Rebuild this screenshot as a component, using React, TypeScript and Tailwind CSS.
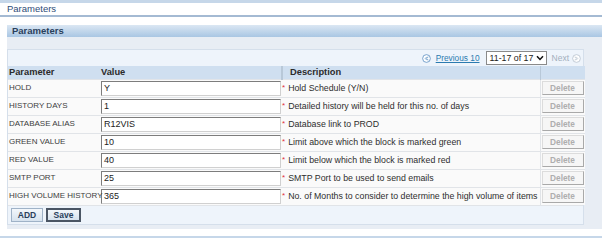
import React from "react";

const rows = [
  { name: "HOLD", value: "Y", desc: "Hold Schedule (Y/N)" },
  { name: "HISTORY DAYS", value: "1", desc: "Detailed history will be held for this no. of days" },
  { name: "DATABASE ALIAS", value: "R12VIS", desc: "Database link to PROD" },
  { name: "GREEN VALUE", value: "10", desc: "Limit above which the block is marked green" },
  { name: "RED VALUE", value: "40", desc: "Limit below which the block is marked red" },
  { name: "SMTP PORT", value: "25", desc: "SMTP Port to be used to send emails" },
  { name: "HIGH VOLUME HISTORY", value: "365", desc: "No. of Months to consider to determine the high volume of items" },
];

const CircleArrow = ({ dir, color }: { dir: "left" | "right"; color: string }) => (
  <svg width="9" height="9" viewBox="0 0 10 10">
    <circle cx="5" cy="5" r="4.3" fill="white" stroke={color} strokeWidth="0.9" />
    {dir === "left" ? (
      <path d="M5.6 3 L3.6 5 L5.6 7 M7.2 3 L5.2 5 L7.2 7" fill="none" stroke={color} strokeWidth="0.9" />
    ) : (
      <path d="M2.8 3 L4.8 5 L2.8 7 M4.4 3 L6.4 5 L4.4 7" fill="none" stroke={color} strokeWidth="0.9" />
    )}
  </svg>
);

export default function App() {
  return (
    <div
      className="w-[602px] h-[238px] overflow-hidden bg-white text-[#333] text-[8px] leading-none"
      style={{ fontFamily: '"Liberation Sans", Arial, sans-serif' }}
    >
      {/* top strip */}
      <div className="h-[3px] bg-[#c6d7e9]" />

      {/* page title */}
      <div className="h-[14px] border-b-2 border-[#a4bad3] flex items-center pl-[7px] text-[9.5px] text-[#2f4d78]">
        Parameters
      </div>

      <div className="h-[8px]" />

      {/* region */}
      <div className="ml-[7px]">
        <div className="h-[12px] bg-gradient-to-b from-[#dbe7f3] to-[#a9c6e3] flex items-center pl-[5px] font-bold text-[9.5px] text-[#2a3f5c]">
          Parameters
        </div>

        <div className="bg-[#e8edf4] pt-[12px] pb-[4px] pr-[18px]">
          <div className="w-[577px] bg-[#eef4fb] border border-[#d5dfeb]">
            {/* pagination */}
            <div className="h-[16px] flex items-center justify-end pr-[2px] gap-[3px]">
              <CircleArrow dir="left" color="#5b8fc2" />
              <span className="text-[#2b7bb0] underline ml-[2px] text-[8.3px]">Previous 10</span>
              <div className="ml-[3px] w-[61px] h-[14px] bg-white border border-[#8a8a8a] flex items-center justify-between pl-[3px] pr-[2px] text-[#222] text-[8.8px]">
                <span>11-17 of 17</span>
                <svg width="8" height="6" viewBox="0 0 8 6">
                  <path d="M1 1.2 L4 4.5 L7 1.2" fill="none" stroke="#111" strokeWidth="1.5" />
                </svg>
              </div>
              <span className="text-[#a3afbd] ml-[2px] text-[8.5px]">Next</span>
              <CircleArrow dir="right" color="#b7c2cf" />
            </div>

            <table className="w-full border-collapse table-fixed">
              <colgroup>
                <col className="w-[93px]" />
                <col className="w-[181px]" />
                <col className="w-[258px]" />
                <col className="w-[45px]" />
              </colgroup>
              <thead>
                <tr className="h-[13px] bg-[#cfdff0] text-[9.3px] text-[#2b2b2b]">
                  <th className="text-left pl-[1px] font-bold">Parameter</th>
                  <th className="text-left font-bold">Value</th>
                  <th className="text-left font-bold border-l-2 border-[#b8c8d8] pl-[7px]">Description</th>
                  <th className="border-l border-[#b8c8d8]" />
                </tr>
              </thead>
              <tbody>
                {rows.map((r) => (
                  <tr key={r.name} className="h-[18px] bg-[#fafafa] border-t border-[#e1e4e8]">
                    <td className="pl-[1px] text-[#3d3d3d] whitespace-nowrap">{r.name}</td>
                    <td className="pr-[1px]">
                      <div className="h-[15px] w-[180px] bg-white border border-[#7d7d7d] border-r-[#d0d0d0] border-b-[#d0d0d0] flex items-center pl-[2px] text-[#222] text-[9px]">
                        {r.value}
                      </div>
                    </td>
                    <td className="whitespace-nowrap text-[#2e2e2e] text-[8.8px]">
                      <span className="text-[#e0303a] mr-[3px] align-top text-[8px]">*</span>
                      {r.desc}
                    </td>
                    <td className="border-l border-[#e1e4e8] pl-[1px]">
                      <div className="w-[42px] h-[14px] bg-[#f6f6f6] border border-[#dcdcdc] border-r-[#a9a9a9] border-b-[#a9a9a9] flex items-center justify-center text-[#aeaeae] font-bold text-[8.3px]">
                        Delete
                      </div>
                    </td>
                  </tr>
                ))}
              </tbody>
            </table>

            {/* footer buttons */}
            <div className="h-[19px] flex items-center pl-[3px] gap-[3px] border-t border-[#e1e4e8]">
              <div className="w-[32px] h-[14px] bg-gradient-to-b from-[#f3f7fb] to-[#d6e2ee] border border-[#9fb2c7] flex items-center justify-center font-bold text-[8.5px] text-[#2a3f5c]">
                ADD
              </div>
              <div className="w-[35px] h-[14px] bg-gradient-to-b from-[#f3f7fb] to-[#d6e2ee] border-2 border-[#4a5564] flex items-center justify-center font-bold text-[8.5px] text-[#2a3f5c]">
                Save
              </div>
            </div>
          </div>
        </div>
      </div>

      <div className="h-[7px]" />
      <div className="h-[4px] bg-[#c6d7e9]" />
    </div>
  );
}
